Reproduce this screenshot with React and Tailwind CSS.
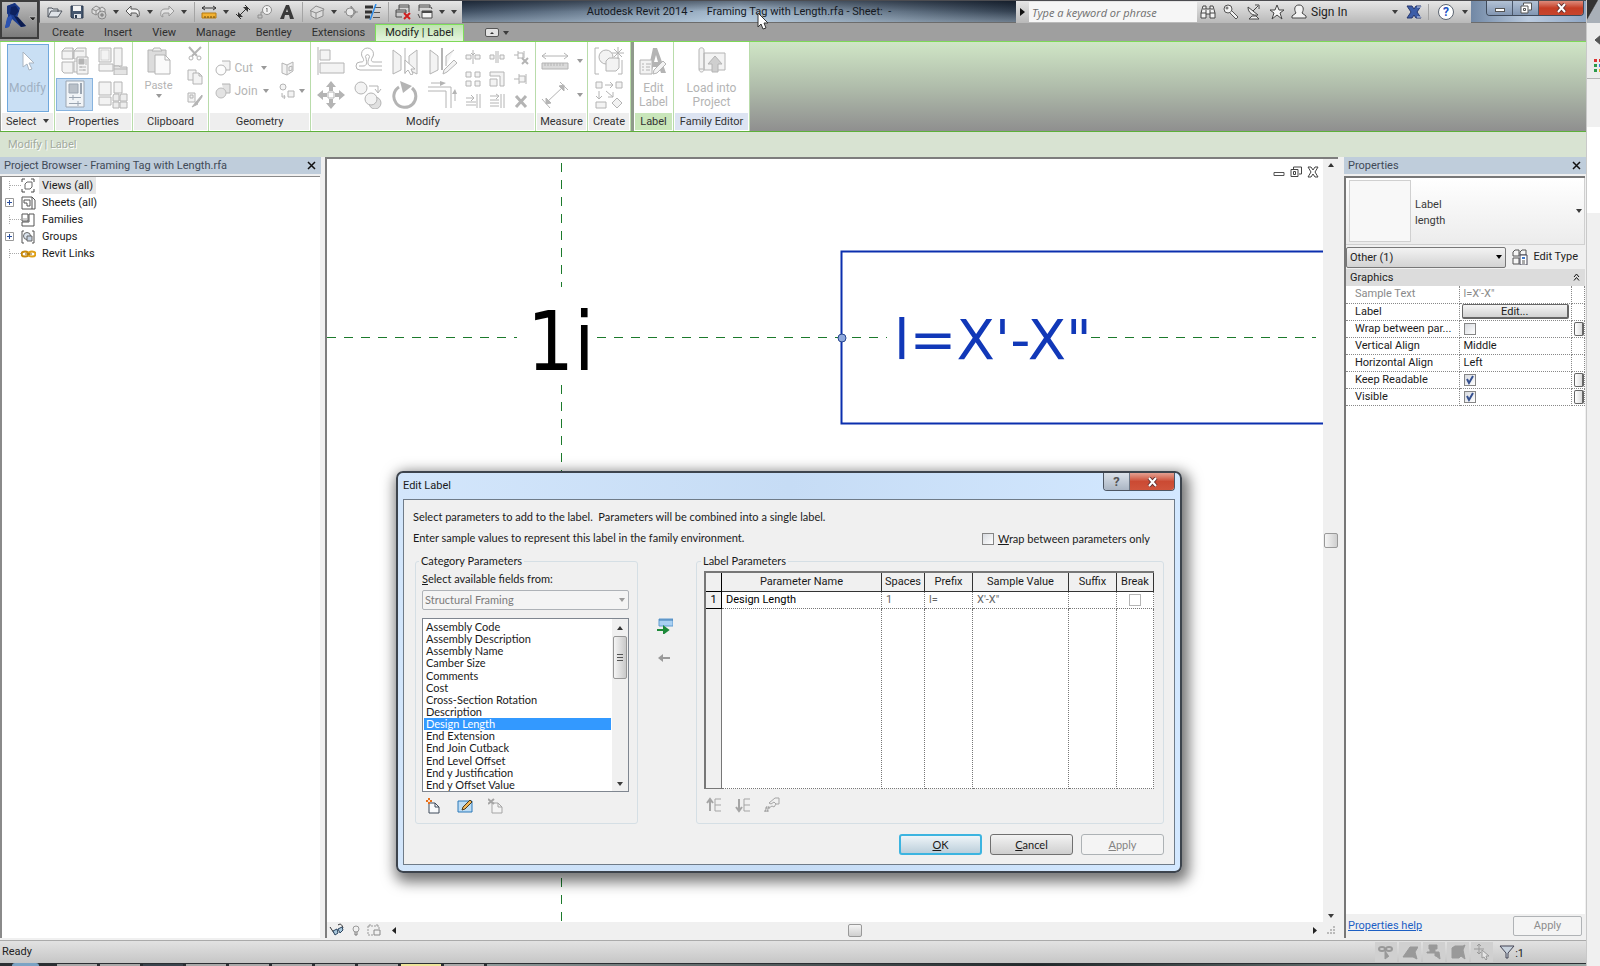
import { useState } from "react";

const UI = "font-[Roboto,'Open_Sans',sans-serif]";

function Icon({ w = 16, h = 16, label, children }) {
  return (
    <svg
      width={w}
      height={h}
      viewBox={`0 0 ${w} ${h}`}
      fill="none"
      stroke="currentColor"
      className="shrink-0"
      role={label ? "img" : undefined}
      aria-label={label}
      aria-hidden={label ? undefined : true}
    >
      {children}
    </svg>
  );
}

function Caret({ className = "text-[#3c3c3c]" }) {
  return (
    <span className={`shrink-0 ${className}`}>
      <Icon w={6} h={4}>
        <path d="M0 0h6L3 4z" fill="currentColor" stroke="none" />
      </Icon>
    </span>
  );
}

/* ---------- quick access toolbar ---------- */

const quickItems = [
  { name: "Open", icon: <Icon><path d="M1 13V4h4l1 1h5v3M1 13l3-6h11l-4 6z" fill="#dfe3e8" stroke="#50565e" /></Icon> },
  { name: "Save", icon: <Icon><path d="M2 2h12v12H3l-1-1z" fill="#45576f" stroke="#2c3a4e" /><path d="M4 2h8v5H4z" fill="#f4f4f4" stroke="none" /><path d="M5 10h7v4H5z" fill="#dfe3e8" stroke="none" /><path d="M6 11h2v3H6z" fill="#2c3a4e" stroke="none" /></Icon> },
  { name: "Synchronize", icon: <Icon><path d="M1 5l4-3 4 2v4l-4 3-4-2zM1 5l4 2 4-3M5 7v4M8 5l3-2 3 2v5" fill="#dedede" stroke="#8a8a8a" /><circle cx="11" cy="11" r="4" fill="#c9c9c9" stroke="#8a8a8a" /><path d="M9 11h4M11 9v4" stroke="#777" /></Icon> },
  { caret: "Synchronize options" },
  { name: "Undo", icon: <Icon><path d="M1 7l5-5v3h4c3 0 5 2 4 7l-2 1c1-3 0-4-2-4H6v3z" fill="#f3f3f3" stroke="#555" /></Icon> },
  { caret: "Undo list" },
  { name: "Redo", icon: <Icon><path d="M15 7l-5-5v3H6c-3 0-5 2-4 7l2 1c-1-3 0-4 2-4h4v3z" fill="#e3e3e3" stroke="#999" /></Icon> },
  { caret: "Redo list" },
  { sep: true },
  { name: "Measure", icon: <Icon><path d="M1 4h14M4 2L1 4l3 2M12 2l3 2-3 2" stroke="#333" /><path d="M1 9h14v5H1z" fill="#f2b233" stroke="#b57a12" /><path d="M4 12v2M7 12v2M10 12v2M13 12v2" stroke="#6d4a0c" /></Icon> },
  { caret: "Measure options" },
  { name: "Aligned Dimension", icon: <Icon><path d="M3 13L13 3M1 10l5 5M10 1l5 5" stroke="#333" /><path d="M3 13v-5l5 5zM13 3v5L8 3z" fill="#333" stroke="none" /></Icon> },
  { name: "Tag by Category", icon: <Icon><circle cx="10" cy="6" r="4.500" fill="#f1f1f1" stroke="#8e8e8e" /><path d="M9 5l1-1v4" stroke="#777" /><path d="M6 8H4v3M1 11h4v3H1z" stroke="#8e8e8e" /></Icon> },
  { name: "Text", icon: <Icon><path d="M1 15L7 1h3l5 14h-4l-1-4H6l-1 4zM7 8h2L8 5z" fill="#3a3a3a" stroke="none" fillRule="evenodd" /></Icon> },
  { sep: true },
  { name: "Default 3D View", icon: <Icon><path d="M1 7l6-5 8 3-1 2v5l-7 3-5-3V7z" fill="#dcdcdc" stroke="#8c8c8c" /><path d="M7 9v6M7 9l7-3M7 9L2 7" stroke="#8c8c8c" /></Icon> },
  { caret: "3D view options" },
  { name: "Section", icon: <Icon><path d="M1 8h2M12 8h3M8 2l5 6-5 6z" fill="#9a9a9a" stroke="#8c8c8c" /><circle cx="7" cy="8" r="4" fill="#e8e8e8" stroke="#8c8c8c" /></Icon> },
  { name: "Thin Lines", icon: <Icon><path d="M0 3h8M0 8h7M0 13h5" stroke="#333" strokeWidth="3" /><path d="M10 3.500h6M9 8.500h6M8 13.500h7" stroke="#555" /><path d="M11 0L5 16" stroke="#2c8be8" strokeWidth="1.500" /></Icon> },
  { sep: true },
  { name: "Close Hidden Windows", icon: <Icon><path d="M4 6V1h10v7M4 3h10M1 13V6h10v3M1 8h10M1 13h6" fill="none" stroke="#4a4a4a" /><path d="M9 9l6 6M15 9l-6 6" stroke="#cf1f1f" strokeWidth="2" /></Icon> },
  { name: "Switch Windows", icon: <Icon><path d="M2 7V1h11v3M2 3h11" stroke="#4a4a4a" /><path d="M5 7h10v7H5z" fill="#f4f4f4" stroke="#4a4a4a" /><path d="M5 8h10" stroke="#4a4a4a" strokeWidth="2" /><path d="M1 10l2 4M14 3l1 2" stroke="#4a4a4a" /></Icon> },
  { caret: "Window list" },
  { caret: "Customize Quick Access Toolbar" },
];

function QuickAccess() {
  return (
    <div className="flex items-center h-[22px] pl-1 pr-[2px] bg-gradient-to-b from-[#e6e6e6] to-[#b9b9b9] shrink-0">
      {quickItems.map((item, i) => {
        if (item.sep) return <span key={i} className="w-2 h-5 flex justify-center"><span className="w-px bg-[#a4a4a4]" /></span>;
        if (item.caret)
          return (
            <button key={i} aria-label={item.caret} className="w-3 h-5 flex items-center justify-center">
              <Caret />
            </button>
          );
        return (
          <button key={i} aria-label={item.name} className="w-[22px] h-5 flex items-center justify-center">
            {item.icon}
          </button>
        );
      })}
    </div>
  );
}

const infoItems = [
  { name: "Search", icon: <Icon><path d="M3 2h3v3h4V2h3l2 7v5H10v-4H6v4H1V9z" fill="#f3f3f3" stroke="#454545" /><path d="M1 9h5M10 9h5M6 6v4M10 6v4M3 5h3M10 5h3" stroke="#454545" /></Icon> },
  { name: "Subscription Center", icon: <Icon><circle cx="5" cy="5" r="4" fill="#f3f3f3" stroke="#555" /><path d="M7 9l6 6 2-2-6-6" fill="#f3f3f3" stroke="#555" /><circle cx="4" cy="4" r="1" stroke="#555" /></Icon> },
  { name: "Communication Center", icon: <Icon><path d="M2 3c0 6 5 9 10 8L2 3zM7 7l5-5M9 1h4v4" fill="#f3f3f3" stroke="#454545" /><path d="M3 15h10l-3-3H6z" fill="#f3f3f3" stroke="#454545" /></Icon> },
  { name: "Favorites", icon: <Icon><path d="M8 1l2 5h5l-4 3 2 6-5-4-5 4 2-6-4-3h5z" fill="#f6f6f6" stroke="#454545" /></Icon> },
];

function TitleBar() {
  return (
    <div className="flex items-center h-[23px] pt-px bg-[#4c4c50] border-b border-[#6c6c6c]">
      <div className="w-[40px] shrink-0" />
      <QuickAccess />
      <div className="relative flex-1 min-w-0 h-full bg-gradient-to-r from-[#2c3a4c] via-[#b4c9dc] to-[#1d2836]">
        <div className="absolute inset-0 bg-gradient-to-b from-[#0d1420]/50 via-[#8fa6bd]/20 to-[#c0d4e6]/50" />
        <p className="relative text-center text-[11px] leading-[21px] text-[#15191f] whitespace-pre">
          Autodesk Revit 2014 -     Framing Tag with Length.rfa - Sheet:  -
        </p>
      </div>
      <div className="flex items-center h-[22px] bg-gradient-to-b from-[#e6e6e6] to-[#b9b9b9] shrink-0">
        <button aria-label="Show search" className="w-[13px] flex justify-center">
          <Icon w={5} h={8}><path d="M0 0v8l5-4z" fill="#111" stroke="none" /></Icon>
        </button>
        <input
          aria-label="Search help"
          placeholder="Type a keyword or phrase"
          className="w-[168px] h-5 px-[3px] pt-[2px] bg-[#f6f6f6] font-['Open_Sans',sans-serif] text-[11px] italic placeholder:text-[#6e6e6e]"
        />
        <div className="flex gap-[7px] px-[3px]">
          {infoItems.map((item) => (
            <button key={item.name} aria-label={item.name}>{item.icon}</button>
          ))}
        </div>
        <button className="flex items-center gap-1 w-[110px] pl-[3px] text-[12px] text-[#222]">
          <Icon><path d="M5 9C3 6 3 1 8 1s5 5 3 8l4 3v2H1v-2z" fill="#f3f3f3" stroke="#454545" /></Icon>
          <span>Sign In</span>
          <span className="ml-auto"><Caret /></span>
        </button>
        <button aria-label="Exchange Apps" className="pl-[8px] pr-[6px]">
          <Icon><path d="M1 2h5l2 3 2-3h5l-4 6 4 6h-5l-2-3-2 3H1l4-6z" fill="#3c5da8" stroke="#26376e" /><path d="M11 3h4M11 13h4" stroke="#cdd8f0" /></Icon>
        </button>
        <span className="w-px h-4 bg-[#a4a4a4]" />
        <button aria-label="Help" className="flex items-center gap-2 pl-[9px] pr-[3px]">
          <span className="size-4 rounded-full border border-[#5b6470] bg-white text-[12px] leading-[14px] font-bold text-[#2352c4]">?</span>
          <Caret />
        </button>
      </div>
      <div className="w-[115px] h-full shrink-0 flex items-start justify-end pr-[2px] bg-gradient-to-r from-[#7188a5] via-[#bccce0] to-[#8fa6c4]">
        <div className="flex h-[15px] border border-t-0 border-[#3f4a5a] rounded-b-[4px] overflow-hidden">
          <button aria-label="Minimize" className="w-[26px] flex items-center justify-center bg-gradient-to-b from-[#b3c2d5] to-[#8296b2] border-r border-[#4b586b]">
            <span className="w-[10px] h-1 mt-1 bg-white border border-[#555]" />
          </button>
          <button aria-label="Restore" className="w-[26px] flex items-center justify-center bg-gradient-to-b from-[#b3c2d5] to-[#8296b2] border-r border-[#4b586b]">
            <Icon w={12} h={12}><path d="M3.500 3V1h8v7H9" fill="#fff" stroke="#555" /><path d="M1 4h7v7H1z" fill="#fff" stroke="#555" /><path d="M3.500 6.500h2v2h-2z" stroke="#555" /></Icon>
          </button>
          <button aria-label="Close" className="w-[44px] flex items-center justify-center bg-gradient-to-b from-[#dd8a7b] via-[#c53d25] to-[#c7452e]">
            <Icon w={11} h={10}><path d="M2 1l7 8M9 1L2 9" stroke="#633" strokeWidth="4" /><path d="M2 1l7 8M9 1L2 9" stroke="#fff" strokeWidth="2" /></Icon>
          </button>
        </div>
      </div>
    </div>
  );
}

function AppButton() {
  return (
    <button aria-label="Application menu" className="absolute left-0 top-0 w-[39px] h-[39px] border-2 border-[#3d3d3d] bg-gradient-to-b from-[#bdbdbd] to-[#7b7b7b] flex items-start justify-center">
      <Icon w={35} h={33}>
        <path d="M5 4l8-3 5 5-3 10 9 8-5 1-9-8-3 8-4 1 3-12z" fill="#1b3c8f" stroke="none" />
        <path d="M5 4l8-3 1 6-5 4-4 1z" fill="#16337f" stroke="none" />
        <path d="M9 5l5-1 3 5-4 5-5-2z" fill="#0e2260" stroke="none" />
        <path d="M12 14l4 1 8 9-5 1z" fill="#0c1c4f" stroke="none" />
        <path d="M3 26l2-10 4-3 1 3-3 9z" fill="#2b52b0" stroke="none" />
        <path d="M27 15h7l-3 4z" fill="#222" stroke="#ddd" strokeWidth="0.500" />
      </Icon>
    </button>
  );
}

const tabs = ["Create", "Insert", "View", "Manage", "Bentley", "Extensions"];

function TabBar() {
  return (
    <nav className="flex items-end h-[19px] pl-[42px] bg-[#9f9f9f] text-[11px] leading-4 text-[#2e2e2e] border-b border-[#7ed957]">
      {tabs.map((t) => (
        <button key={t} className="px-[10px] h-[17px]">{t}</button>
      ))}
      <button className="px-[9px] h-[17px] border border-b-0 border-[#7ee05a] bg-gradient-to-b from-[#bfe3b0] to-[#e6f5df] text-[#222]">
        Modify | Label
      </button>
      <button aria-label="Minimize ribbon" className="flex items-center gap-1 h-[17px] ml-[21px]">
        <span className="w-[14px] h-[9px] rounded-[2px] border border-[#555] bg-[#e3e3e3] flex items-center justify-center">
          <Icon w={4} h={2}><path d="M0 2h4L2 0z" fill="#333" stroke="none" /></Icon>
        </span>
        <Caret />
      </button>
    </nav>
  );
}

/* ---------- ribbon ---------- */

function Tool({ name, className = "", children }) {
  return (
    <button aria-label={name} disabled className={`flex items-center justify-center ${className}`}>
      {children}
    </button>
  );
}

function Panel({ title, width, tone = "bg-[#eeeeee]", children }) {
  return (
    <section className={`flex flex-col shrink-0 bg-white border-r border-[#b9dcab] ${width}`}>
      <div className="flex-1 flex items-center justify-center text-[#b4b4b4]">{children}</div>
      <h2 className={`h-[17px] mx-px mb-px text-center text-[11px] leading-[17px] text-[#333] whitespace-nowrap ${tone}`}>{title}</h2>
    </section>
  );
}

const F = "#f3f3f3";

function PropertiesPanel() {
  return (
    <div className="grid grid-cols-2 gap-x-px">
      <Tool name="Type Properties" className="w-[37px] h-[34px]">
        <Icon w={28} h={28}>
          <path d="M1 4l3-3h8v11H1zM13 4l3-3h9v11H13zM1 15h11v11H3l-2-2zM13 14h8v11h-8z" fill={F} />
          <path d="M1 4h10M13 4h10M12 1v11" />
          <path d="M16 10h11v17H16z" fill={F} /><path d="M18 12h5v5h-5z" fill="currentColor" /><path d="M25 12v6M18 20h7M18 23h7M20 19v2M23 22v2" />
        </Icon>
      </Tool>
      <Tool name="Family Category" className="w-[37px] h-[34px]">
        <Icon w={30} h={28}>
          <path d="M1 1h12v14H1zM16 1h8v18h-8zM1 17h14v7H1z" fill={F} />
          <path d="M3 3h8v10H3z" strokeWidth="0.500" />
          <path d="M16 19h5l1 1h7v8H16z" fill="#e4e4e4" /><path d="M16 22h13" />
        </Icon>
      </Tool>
      <Tool name="Properties" className="w-[37px] h-[33px] border border-[#87b3de] bg-[#c6dcf2]">
        <Icon w={20} h={28}>
          <path d="M1 1h18v26H1z" fill="#f1f4f7" stroke="#9ba5b1" />
          <path d="M4 4h9v9H4z" fill="#b9c0c8" stroke="#9ba5b1" />
          <path d="M16 3v11" stroke="#9ba5b1" strokeWidth="2" />
          <path d="M4 17.500h12M4 23.500h12M8 15v5M13 21v5" stroke="#9ba5b1" />
        </Icon>
      </Tool>
      <Tool name="Family Types" className="w-[37px] h-[34px]">
        <Icon w={30} h={28}>
          <path d="M1 1h12v13H1zM16 1h8v11h-8zM1 16h12v8H1z" fill={F} />
          <path d="M15 15l1-2h5v7h-6zM22 15l1-2h6v7h-7zM15 21h6v6h-6zM22 21h7v6h-7z" fill="#ededed" />
        </Icon>
      </Tool>
    </div>
  );
}

function ClipboardPanel() {
  return (
    <div className="flex items-start gap-3 pl-1 pb-px">
      <button disabled className="flex flex-col items-center text-[11px] leading-4 w-8">
        <Icon w={26} h={30}>
          <path d="M2 4h18v22H2z" fill="#dcdcdc" /><path d="M6 5l2-3h6l2 3z" fill={F} />
          <path d="M9 9h10l5 5v14H9z" fill="#fafafa" /><path d="M19 9v5h5" />
        </Icon>
        <span className="pt-[2px]">Paste</span>
        <Caret className="text-[#9a9a9a]" />
      </button>
      <div className="flex flex-col gap-[7px]">
        <Tool name="Cut to Clipboard">
          <Icon><path d="M2 1l8 9M14 1L5 10" strokeWidth="2" /><circle cx="4" cy="12" r="2" /><circle cx="12" cy="12" r="2" /></Icon>
        </Tool>
        <Tool name="Copy to Clipboard">
          <Icon><path d="M1 1h8v10H1z" fill={F} /><path d="M6 4h6l3 3v8H6z" fill={F} /><path d="M12 4v3h3" /></Icon>
        </Tool>
        <Tool name="Match Type Properties">
          <Icon><path d="M1 1h7v9H1zM3 3h3v3H3z" fill={F} /><path d="M15 3l-6 7 1 2 5-7zM9 10l-4 5 6-3z" fill="currentColor" /></Icon>
        </Tool>
      </div>
    </div>
  );
}

function GeometryPanel() {
  return (
    <div className="grid grid-cols-[60px_26px] gap-y-[7px] pr-1 pt-[3px] text-[12px] leading-4">
      <button disabled className="flex items-center gap-1 text-left">
        <Icon><path d="M7 1h8v9H9" fill={F} /><circle cx="6" cy="10" r="5" fill="#fdfdfd" /></Icon>
        <span>Cut</span>
        <span className="pl-1"><Caret className="text-[#9a9a9a]" /></span>
      </button>
      <Tool name="Cope">
        <Icon><path d="M2 3l5 2 6-3v9l-6 4-5-2z" fill={F} /><path d="M7 5v10M9 7l3-1v4l-3 1z" /></Icon>
      </Tool>
      <button disabled className="flex items-center gap-1 text-left">
        <Icon><path d="M7 1h8v9H9" fill="#e3e3e3" /><circle cx="6" cy="10" r="5" fill="#e3e3e3" stroke="#bbb" /></Icon>
        <span>Join</span>
        <span className="pl-px"><Caret className="text-[#9a9a9a]" /></span>
      </button>
      <button disabled aria-label="Split Face" className="flex items-center gap-1 pl-1">
        <Icon><circle cx="4" cy="4" r="3" fill={F} /><path d="M3 10v4h3M5 12l1 2-1 2M9 8h6v6H9z" fill={F} /></Icon>
        <Caret className="text-[#9a9a9a]" />
      </button>
    </div>
  );
}

const modifyLarge = [
  { name: "Align", d: <><path d="M1 0v28" /><path d="M3 3h10v10H3zM3 16h24v10H3z" fill={F} /></> },
  { name: "Offset", d: <><path d="M28 15h-8c-3 0-3-2-2-4a6 6 0 1 0-9 0c1 2 1 4-2 4H6a4 4 0 0 0 0 8h22" /><path d="M28 19H17c-3 0-4-3-2-8a2 2 0 1 0-3 0c1 5 1 8-3 8H5" /></> },
  { name: "Mirror Pick Axis", d: <><path d="M2 3l8 6v14l-8 4zM26 3l-8 6v14l8 4z" fill={F} /><path d="M14 1v26" /><path d="M14 13v13l3-3 3 5 2-1-2-5h4z" fill="#fff" /></> },
  { name: "Mirror Draw Axis", d: <><path d="M2 3l8 6v14l-8 4zM26 3l-8 6v10" fill={F} /><path d="M14 1v22" strokeWidth="2" /><path d="M15 27l1-4L26 13l3 3-10 9z" fill={F} /></> },
  { name: "Move", d: <><path d="M11 11h6v6h-6z" /><path d="M14 0l5 6h-3v4h-4V6H9zM14 28l5-6h-3v-4h-4v4H9zM0 14l6-5v3h4v4H6v3zM28 14l-6-5v3h-4v4h4v3z" fill="currentColor" stroke="none" /></> },
  { name: "Copy", d: <><circle cx="7" cy="7" r="6" fill={F} /><path d="M15 5h9v6M21 8l3 4 3-4" strokeWidth="1" /><circle cx="21" cy="22" r="6" fill="#e0e0e0" /><circle cx="17" cy="18" r="6" fill={F} /></> },
  { name: "Rotate", d: <><path d="M8 6a11 11 0 1 0 13 1" strokeWidth="3" /><path d="M9 0l12 5-9 7z" fill="currentColor" stroke="none" /></> },
  { name: "Trim", d: <><path d="M0 10h18v17M0 6h23v21" /><path d="M3 2h10M27 12v8" /><path d="M12 0l6 2-6 3zM24 13l3-5 2 5z" fill="currentColor" stroke="none" /></> },
];

const modifySmall = [
  { name: "Split Element", d: <path d="M1 6h5v4H1zM10 6h5v4h-5zM8 1v14M6 4l2 2 2-2" fill={F} /> },
  { name: "Split with Gap", d: <path d="M1 6h4v4H1zM11 6h4v4h-4zM7 2v12M9 2v12" fill={F} /> },
  { name: "Unpin", d: <><path d="M1 6h4M5 2v8M5 4h5v5H5M11 2v7" /><path d="M9 9l6 6M15 9l-6 6" strokeWidth="2" /></> },
  { name: "Array", d: <path d="M1 1h5v5H1zM10 1h5v5h-5zM1 10h5v5H1zM10 10h5v5h-5z" fill={F} strokeWidth="1" /> },
  { name: "Scale", d: <path d="M1 1h14v14h-4V5H1zM1 8h7v7H1z" fill={F} /> },
  { name: "Pin", d: <path d="M1 8h5M6 3v10M6 5h6v6H6M13 3v10" fill={F} /> },
  { name: "Trim Single", d: <path d="M1 5h8M6 2l3 3-3 3M1 9h10M1 12h10M12 1v14M15 1v14" /> },
  { name: "Trim Multiple", d: <path d="M1 3h8M1 7h9M1 10h9M1 13h9M7 1l3 2-3 3M12 1v14M15 1v14" /> },
  { name: "Delete", d: <path d="M3 3l10 11M13 3L3 14" strokeWidth="3" /> },
];

function ModifyPanel() {
  return (
    <div className="flex items-center gap-2">
      <div className="grid grid-cols-4 gap-x-2 gap-y-[6px]">
        {modifyLarge.map((t) => (
          <Tool key={t.name} name={t.name}><Icon w={29} h={28}>{t.d}</Icon></Tool>
        ))}
      </div>
      <div className="grid grid-cols-3 gap-x-2 gap-y-[6px] pt-[2px]">
        {modifySmall.map((t) => (
          <Tool key={t.name} name={t.name}><Icon>{t.d}</Icon></Tool>
        ))}
      </div>
    </div>
  );
}

function Ribbon() {
  return (
    <div className="flex h-[90px] pl-px border-b border-[#5db03a] bg-gradient-to-b from-[#d0e6c6] via-[#b0bdab] to-[#8f8f8f]">
      <Panel title={<>Select <span className="inline-block pl-1 pb-[2px]"><Caret /></span></>} width="w-[54px]">
        <button disabled className="w-[42px] h-[68px] border border-[#6fa8dc] bg-[#c9dff4] text-[12px] text-[#9fb0c2] flex flex-col items-center gap-2 pt-[6px]">
          <Icon w={14} h={20}><path d="M2 1v15l4-3 2 6 3-1-3-6h5z" fill="#fff" stroke="#a9b4c0" /></Icon>
          Modify
        </button>
      </Panel>
      <Panel title="Properties" width="w-[78px]"><PropertiesPanel /></Panel>
      <Panel title="Clipboard" width="w-[76px]"><ClipboardPanel /></Panel>
      <Panel title="Geometry" width="w-[102px]"><GeometryPanel /></Panel>
      <Panel title="Modify" width="w-[225px]"><ModifyPanel /></Panel>
      <Panel title="Measure" width="w-[52px]">
        <div className="flex flex-col gap-[6px]">
          <button disabled aria-label="Measure" className="flex items-center gap-2">
            <Icon w={28} h={28}><path d="M1 9h26M5 6L1 9l4 3M23 6l4 3-4 3" strokeWidth="1" /><path d="M1 16h26v6H1z" fill="#dadada" /><path d="M4 16v3M7 16v3M10 16v3M13 16v3M16 16v3M19 16v3M22 16v3" /></Icon>
            <Caret className="text-[#9a9a9a]" />
          </button>
          <button disabled aria-label="Dimension" className="flex items-center gap-2">
            <Icon w={28} h={28}><path d="M5 22L23 5M1 18l8 9M19 1l8 8" /><path d="M5 23v-6l5 5zM23 4v6l-5-5z" fill="currentColor" /></Icon>
            <Caret className="text-[#9a9a9a]" />
          </button>
        </div>
      </Panel>
      <Panel title="Create" width="w-[43px]">
        <div className="flex flex-col gap-[6px]">
          <Tool name="Create Group">
            <Icon w={30} h={28}><path d="M5 1H1v26h4M24 27h4V13" /><circle cx="12" cy="10" r="7" fill={F} /><path d="M12 14l3-3h10v10l-3 3H12z" fill={F} /><path d="M24 0v12M18 6h12M20 2l8 8M28 2l-8 8" /></Icon>
          </Tool>
          <Tool name="Create Similar">
            <Icon w={28} h={28}><path d="M1 1h6v6H1zM21 1h6v6h-6zM1 21h10v6H1zM22 17l5 5-5 5-5-5z" fill={F} /><path d="M10 4h8M15 1l3 3-3 3M4 10v8M1 15l3 3 3-3M11 10l7 6M18 11v5h-5" strokeWidth="1" /></Icon>
          </Tool>
        </div>
      </Panel>
      <div className="w-[3px] bg-[#8f9a8b]" />
      <Panel title="Label" width="w-[40px]" tone="bg-[#c9e6ba]">
        <button disabled className="flex flex-col items-center text-[12px] leading-[14px] gap-1">
          <Icon w={28} h={30}><path d="M9 24L14 1h4l9 25h-5l-2-6h-6l-2 6zM15 15h4l-2-7z" fill="currentColor" stroke="none" fillRule="evenodd" /><path d="M1 13h12v14H1z" fill={F} /><path d="M3 17h2M7 17h5M3 20h2M7 20h4M3 23h2M7 23h4" /><path d="M14 27l1-4 9-9 3 3-9 9z" fill={F} /></Icon>
          <span>Edit<br />Label</span>
        </button>
      </Panel>
      <Panel title="Family Editor" width="w-[76px]" tone="bg-[#dde4f2]">
        <button disabled className="flex flex-col items-center text-[12px] leading-[14px] gap-1">
          <Icon w={28} h={30}><path d="M6 6h21v17H6zM1 3c0-3 5-3 5 0v19c0 4-5 4-5 0z" fill={F} /><path d="M1 22h4" /><path d="M17 9l7 8h-4v8h-6v-8h-4z" fill="#cfcfcf" /></Icon>
          <span>Load into<br />Project</span>
        </button>
      </Panel>
    </div>
  );
}

/* ---------- docked panels ---------- */

function CloseX() {
  return <Icon w={9} h={9}><path d="M1 1l7 7M8 1L1 8" stroke="#111" strokeWidth="1.500" /></Icon>;
}

function DockTitle({ children }) {
  return (
    <div className="h-[17px] flex items-center justify-between pl-1 pr-[5px] bg-[#bfcddb] text-[11px] leading-[17px] text-[#3f4a57]">
      <h2>{children}</h2>
      <button aria-label={`Close ${children}`}><CloseX /></button>
    </div>
  );
}

const tree = [
  { name: "Views (all)", selected: true, icon: <><path d="M4 1H1v3M1 11v3h3M10 1h3v3M13 11v3h-3" stroke="#444" /><path d="M4 6l2-2h5v5l-2 2H4z" fill="#fff" stroke="#666" /></> },
  { name: "Sheets (all)", expand: true, icon: <><path d="M1 2h10l3 3v9H1z" fill="#fff" stroke="#555" /><path d="M11 2v12M3 5h6v6H6V8H3z" stroke="#555" /></> },
  { name: "Families", icon: <><path d="M1 2h6v7H1zM8 2h5v12H1v-4h7z" fill="#fff" stroke="#555" /><path d="M2 7h4" stroke="#999" /></> },
  { name: "Groups", expand: true, icon: <><path d="M3 2H1v12h2M11 2h2v12h-2" stroke="#555" /><circle cx="6" cy="7" r="3.500" fill="#dbe4ee" stroke="#666" /><path d="M6 7h5v5H6z" fill="#c6d2e0" stroke="#666" /></> },
  { name: "Revit Links", icon: <><ellipse cx="4" cy="8" rx="3.500" ry="2.500" stroke="#c98a0c" strokeWidth="2" /><ellipse cx="11" cy="8" rx="3.500" ry="2.500" stroke="#e0a015" strokeWidth="2" /><path d="M4 8h7" stroke="#8b5d05" /></> },
];

function ProjectBrowser() {
  return (
    <aside className="w-[321px] shrink-0 flex flex-col">
      <DockTitle>Project Browser - Framing Tag with Length.rfa</DockTitle>
      <ul className="flex-1 mt-[2px] mb-[2px] mr-[1px] pl-[3px] border-l-2 border-t border-[#8a8a8a] bg-white text-[11px] text-[#1a1a1a]">
        {tree.map((n) => (
          <li key={n.name} className="h-[17px] flex items-center">
            <span className="w-4 flex items-center">
              {n.expand ? (
                <button aria-label={`Expand ${n.name}`}>
                  <Icon w={9} h={9}><path d="M.5.5h8v8h-8z" fill="#fff" stroke="#999" /><path d="M2 4.500h5M4.500 2v5" stroke="#2b4f9e" /></Icon>
                </button>
              ) : (
                <Icon w={16} h={9}><path d="M4.500 0v9M5 4.500h11" stroke="#aaa" strokeDasharray="1 1" /></Icon>
              )}
            </span>
            <Icon w={15} h={16}>{n.icon}</Icon>
            <span className={`ml-[3px] px-[3px] leading-[17px] ${n.selected ? "bg-[#e6e6e6]" : ""}`}>{n.name}</span>
          </li>
        ))}
      </ul>
    </aside>
  );
}

function GridRow({ name, muted, button, children }) {
  return (
    <tr className={`h-[17px] ${muted ? "text-[#8a8a8a]" : "text-[#1a1a1a]"}`}>
      <th scope="row" className="pl-[9px] text-left font-normal border-b border-r border-dotted border-[#888]">{name}</th>
      <td className="pl-1 border-b border-r border-dotted border-[#888]">{children}</td>
      <td className="border-b border-r border-dotted border-[#888]">
        {button && <button aria-label={`Associate ${name}`} className="block w-[10px] h-[14px] ml-[2px] rounded-[2px] border border-r-2 border-[#666] bg-gradient-to-r from-white to-[#ddd]" />}
      </td>
    </tr>
  );
}

function Check({ label, checked, onChange, dim }) {
  return (
    <span className="relative inline-flex size-3 align-middle">
      <input
        type="checkbox"
        aria-label={label}
        checked={checked}
        onChange={onChange}
        className={`appearance-none size-3 border bg-gradient-to-br ${dim ? "border-[#b5b5b5] from-white to-white" : "border-[#858585] from-[#d8dbe0] to-white"}`}
      />
      {checked && (
        <svg viewBox="0 0 12 12" className="absolute inset-0 pointer-events-none" fill="none" stroke="#35508f" strokeWidth="2">
          <path d="M3 5l2 4 4-7" />
        </svg>
      )}
    </span>
  );
}

function Properties() {
  const [flags, setFlags] = useState({ wrap: false, keep: true, visible: true });
  const flip = (k) => () => setFlags({ ...flags, [k]: !flags[k] });
  return (
    <aside className="w-[242px] shrink-0 flex flex-col bg-[#f0f0f0]">
      <DockTitle>Properties</DockTitle>
      <div className="flex-1 flex flex-col mt-[2px] mb-[2px] mr-[1px] border-l-2 border-t-2 border-[#777] bg-white text-[11px] leading-4">
        <button className="flex items-center h-[67px] pl-[3px] pr-[2px] gap-1 text-left border-b border-r border-[#d0d0d0] bg-gradient-to-b from-white to-[#ececec] text-[#3a3a3a]">
          <span className="w-[62px] h-[62px] border border-[#d0d0d0] bg-[#f8f8f8]" />
          <span className="pt-1">Label<br />length</span>
          <span className="ml-auto"><Caret /></span>
        </button>
        <div className="flex items-center justify-between h-6 pr-[7px] bg-[#f0f0f0]">
          <span className="relative w-[160px] h-[21px]">
            <select aria-label="Element filter" className="appearance-none size-full px-[3px] pt-px rounded-[2px] border border-[#777] bg-gradient-to-b from-[#f3f3f3] to-[#d3d3d3] text-[#222]">
              <option>Other (1)</option>
            </select>
            <span className="absolute right-1 top-2 pointer-events-none"><Caret className="text-black" /></span>
          </span>
          <button className="flex items-center gap-[5px] text-[#222]">
            <Icon><path d="M1 3l2-2h4v6H1zM8 3l2-2h4v5H8zM1 9h6v6H1z" fill="#f6f6f6" stroke="#555" /><path d="M8 6h7v10H8z" fill="#fff" stroke="#445" /><path d="M10 8h3v2h-3z" fill="#3f78c9" stroke="none" /><path d="M10 12h3M10 14h3" stroke="#555" /></Icon>
            Edit Type
          </button>
        </div>
        <table className="w-full border-collapse table-fixed">
          <colgroup>
            <col className="w-[113px]" />
            <col />
            <col className="w-[13px]" />
          </colgroup>
          <thead>
            <tr className="h-[17px] bg-[#dcdcdc] text-[#222]">
              <th colSpan={2} className="pl-1 text-left font-normal">Graphics</th>
              <th>
                <button aria-label="Collapse Graphics" className="-ml-1">
                  <Icon w={7} h={8}><path d="M1 4l2.500-3L6 4M1 7.500l2.500-3 2.500 3" stroke="#111" /></Icon>
                </button>
              </th>
            </tr>
          </thead>
          <tbody>
            <GridRow name="Sample Text" muted>l=X'-X"</GridRow>
            <GridRow name="Label">
              <button className="block w-full h-[15px] -ml-[2px] leading-[13px] rounded-[2px] border border-r-2 border-b-2 border-[#666] bg-gradient-to-b from-[#f5f5f5] to-[#d2d2d2]">Edit...</button>
            </GridRow>
            <GridRow name="Wrap between par..." button><Check label="Wrap between parameters" checked={flags.wrap} onChange={flip("wrap")} /></GridRow>
            <GridRow name="Vertical Align">Middle</GridRow>
            <GridRow name="Horizontal Align">Left</GridRow>
            <GridRow name="Keep Readable" button><Check label="Keep Readable" checked={flags.keep} onChange={flip("keep")} /></GridRow>
            <GridRow name="Visible" button><Check label="Visible" checked={flags.visible} onChange={flip("visible")} /></GridRow>
          </tbody>
        </table>
        <div className="mt-auto h-6 flex items-center justify-between pl-[2px] pr-[3px] bg-[#f0f0f0]">
          <a href="#help" className="underline text-[#1c5fc4]">Properties help</a>
          <button disabled className="w-[69px] h-5 rounded-[2px] border border-[#b0b3b6] bg-[#f4f4f4] text-[#8d8d8d]">Apply</button>
        </div>
      </div>
    </aside>
  );
}

/* ---------- drawing area ---------- */

function SheetDrawing() {
  return (
    <svg width="100%" height="100%" className="absolute inset-0" fill="none">
      <g stroke="#1c7a2c" strokeDasharray="9 8">
        <path d="M234.500 4V128M234.500 226V764" />
        <path d="M0 178.500H190M270 178.500H560M764 178.500H989" />
      </g>
      <path d="M1400 92.500H514.500V264.500H1400" stroke="#0b2fae" strokeWidth="2" />
      <circle cx="515" cy="179" r="4" fill="#8fa9dc" stroke="#27468f" />
      <text x="200" y="211" fontSize="82" fill="#000" className="font-['DejaVu_Sans_Condensed','DejaVu_Sans',sans-serif]">1i</text>
      <text x="567" y="200" fontSize="56" fill="#1138b8" className="font-['DejaVu_Sans',sans-serif]">l=X'-X"</text>
    </svg>
  );
}

function Canvas() {
  return (
    <main className="flex-1 min-w-0 ml-1 mb-[2px] flex flex-col border-l-2 border-t-2 border-[#7d7d7d] bg-white">
      <div className="flex-1 flex min-h-0">
        <div className="relative flex-1 min-w-0 overflow-hidden">
          <SheetDrawing />
          <div className="absolute right-1 top-[7px] flex gap-[5px] items-center">
            <button aria-label="Minimize view"><Icon w={12} h={12}><path d="M1 6.500h10v3H1z" fill="#fff" stroke="#555" /></Icon></button>
            <button aria-label="Restore view"><Icon w={12} h={12}><path d="M3.500 3V1h8v7H9M1 3.500h7v7H1zM3.500 5.500h2v3h-2z" stroke="#444" /></Icon></button>
            <button aria-label="Close view"><Icon w={12} h={12}><path d="M1 1h3l2 3 2-3h3L8 6l3 5H8L6 8l-2 3H1l3-5z" fill="#fff" stroke="#444" /></Icon></button>
          </div>
        </div>
        <div className="w-[15px] flex flex-col items-center justify-between py-1 bg-[#f0f0f0]">
          <button aria-label="Scroll up"><Icon w={6} h={4}><path d="M0 4h6L3 0z" fill="#333" stroke="none" /></Icon></button>
          <span className="w-[14px] h-[15px] rounded-[2px] border border-[#999] bg-gradient-to-r from-[#f5f5f5] to-[#cfcfcf]" />
          <button aria-label="Scroll down"><Caret /></button>
        </div>
      </div>
      <div className="h-4 flex items-center bg-[#f0f0f0] text-[#444]">
        <div className="flex items-center gap-1 pl-[2px] w-[58px]">
          <button aria-label="Temporary hide or isolate">
            <Icon w={15} h={14}><path d="M1 4l4 6M9 2c3-2 4 0 5 3" stroke="#333" /><path d="M4 8l4-2 1 4-3 2zM9 6l4-2 1 3-3 3z" fill="#a9c8dc" stroke="#2c4560" /></Icon>
          </button>
          <button aria-label="Reveal hidden elements"><Icon w={15} h={14}><circle cx="8" cy="6" r="3" stroke="#999" /><path d="M7 9v3h2V9" stroke="#777" /></Icon></button>
          <button aria-label="Crop region"><Icon w={15} h={14}><path d="M1 3h11v3M1 3v9h6M3 1v2M10 1v2" stroke="#999" strokeDasharray="2 1" /><path d="M7 7h6v5H7z" stroke="#888" /></Icon></button>
        </div>
        <button aria-label="Scroll left" className="w-3 ml-[3px] flex justify-center"><Icon w={4} h={7}><path d="M4 0v7L0 3.500z" fill="#222" stroke="none" /></Icon></button>
        <span className="flex-1 flex justify-center pr-1">
          <span className="w-[14px] h-[13px] rounded-[2px] border border-[#999] bg-gradient-to-b from-[#f5f5f5] to-[#cfcfcf]" />
        </span>
        <button aria-label="Scroll right" className="mr-[6px]"><Icon w={4} h={7}><path d="M0 0v7l4-3.500z" fill="#222" stroke="none" /></Icon></button>
        <span className="w-[15px] flex justify-center">
          <Icon w={9} h={9}><path d="M7 1h2M4 4h2M7 4h2M1 7h2M4 7h2M7 7h2" stroke="#bbb" strokeWidth="2" /></Icon>
        </span>
      </div>
    </main>
  );
}

/* ---------- edit label dialog ---------- */

const fields = [
  "Assembly Code", "Assembly Description", "Assembly Name", "Camber Size", "Comments", "Cost",
  "Cross-Section Rotation", "Description", "Design Length", "End Extension", "End Join Cutback",
  "End Level Offset", "End y Justification", "End y Offset Value",
];

function Group({ legend, className = "", children }) {
  return (
    <fieldset className={`min-w-0 border border-[#d5dfe5] rounded-[3px] ${className}`}>
      <legend className="-ml-[3px] px-[2px] leading-3">{legend}</legend>
      {children}
    </fieldset>
  );
}

function FieldList() {
  const [selected, setSelected] = useState("Design Length");
  return (
    <div className="flex h-[174px] mt-2 border border-[#7f8690] bg-white">
      <ul role="listbox" aria-label="Available fields" className="flex-1 grid auto-rows-fr overflow-hidden px-px pt-[2px]">
        {fields.map((f) => (
          <li
            key={f}
            role="option"
            aria-selected={f === selected}
            onClick={() => setSelected(f)}
            className={`px-[2px] leading-3 min-h-0 ${f === selected ? "bg-[#3399ff] text-white" : ""}`}
          >
            {f}
          </li>
        ))}
      </ul>
      <div className="w-4 flex flex-col items-center bg-[#f0f0f0]">
        <button aria-label="Scroll list up" className="h-[17px]"><Icon w={6} h={4}><path d="M0 4h6L3 0z" fill="#333" stroke="none" /></Icon></button>
        <span className="w-[14px] h-[43px] rounded-[2px] border border-[#979797] bg-gradient-to-r from-[#f5f5f5] to-[#c9c9c9] flex flex-col items-center justify-center gap-px">
          <span className="w-[6px] h-px bg-[#555]" />
          <span className="w-[6px] h-px bg-[#555] my-px" />
          <span className="w-[6px] h-px bg-[#555]" />
        </span>
        <button aria-label="Scroll list down" className="mt-auto h-[15px]"><Caret /></button>
      </div>
    </div>
  );
}

const columns = [
  ["Parameter Name", "w-[160px]"],
  ["Spaces", "w-[43px]"],
  ["Prefix", "w-[48px]"],
  ["Sample Value", "w-[96px]"],
  ["Suffix", "w-[48px]"],
  ["Break", "w-[37px]"],
];

function LabelTable() {
  const [brk, setBrk] = useState(false);
  const cell = "border-r border-b border-dotted border-[#777]";
  return (
    <table className={`w-full h-[218px] table-fixed border-separate border-spacing-0 border-l-2 border-t-2 border-[#777] bg-white text-[11px] ${UI}`}>
      <thead>
        <tr className="h-[19px] bg-[#f0f0f0]">
          <th aria-label="Row" className="w-[16px] border-r border-b border-black" />
          {columns.map(([name, w]) => (
            <th key={name} className={`font-normal border-r border-b border-[#333] ${w}`}>{name}</th>
          ))}
        </tr>
      </thead>
      <tbody>
        <tr className="h-[17px] leading-4 text-[#666]">
          <th className="font-normal text-black bg-[#f0f0f0] border-r border-b border-black">1</th>
          <td className={`pl-1 text-black ${cell}`}>Design Length</td>
          <td className={`pl-1 ${cell}`}>1</td>
          <td className={`pl-1 ${cell}`}>l=</td>
          <td className={`pl-1 ${cell}`}>X'-X"</td>
          <td className={cell} />
          <td className={`text-center leading-3 ${cell}`}><Check label="Break" dim checked={brk} onChange={() => setBrk(!brk)} /></td>
        </tr>
        <tr>
          <td className="bg-[#f0f0f0] border-r border-b border-[#777]" />
          {columns.map(([name]) => <td key={name} className={cell} />)}
        </tr>
      </tbody>
    </table>
  );
}

function EditLabelDialog() {
  const [wrap, setWrap] = useState(false);
  return (
    <div
      role="dialog"
      aria-label="Edit Label"
      className="absolute left-[396px] top-[471px] w-[786px] flex flex-col px-[5px] pb-[6px] rounded-[7px] border-2 border-[#3d444d] bg-gradient-to-r from-[#d3e6fb] via-[#c6dcf5] to-[#d3e8ff] shadow-[3px_5px_14px_4px_rgba(0,0,0,0.55)] text-[11px] text-[#1a1a1a] font-[Lato,'Open_Sans',sans-serif]"
    >
      <div className={`flex items-start justify-between h-[26px] ${UI}`}>
        <h2 className="pt-1 leading-[17px] text-[11px]">Edit Label</h2>
        <div className="flex h-[18px] border border-t-0 border-[#4d5663] rounded-b-[4px] overflow-hidden">
          <button aria-label="Help" className="w-[26px] bg-gradient-to-b from-[#dbe2ea] to-[#aab5c3] border-r border-[#6b7685] text-[13px] leading-4 font-bold text-[#555]">?</button>
          <button aria-label="Close dialog" className="w-[44px] flex items-center justify-center bg-gradient-to-b from-[#e3a092] via-[#cb4a33] to-[#d0543c]">
            <Icon w={11} h={10}><path d="M2 1l7 8M9 1L2 9" stroke="#633" strokeWidth="4" /><path d="M2 1l7 8M9 1L2 9" stroke="#fff" strokeWidth="2" /></Icon>
          </button>
        </div>
      </div>

      <div className="border border-[#6f7b88] bg-[#f0f0f0] pl-[9px] pr-[10px] pb-[9px]">
        <p className="pt-[9px] leading-4 whitespace-pre">Select parameters to add to the label.  Parameters will be combined into a single label.</p>
        <div className="flex justify-between mt-1 h-[18px] leading-4 pr-[14px]">
          <p className="pt-px">Enter sample values to represent this label in the family environment.</p>
          <label className="flex items-center gap-1 pt-[2px]">
            <Check label="Wrap between parameters only" checked={wrap} onChange={() => setWrap(!wrap)} />
            <span><u>W</u>rap between parameters only</span>
          </label>
        </div>

        <div className="flex mt-2 pl-[2px]">
          <Group legend="Category Parameters" className="w-[223px] h-[269px] pl-[6px] pr-[8px]">
            <label htmlFor="category" className="block mt-1 leading-4"><u>S</u>elect available fields from:</label>
            <div className="relative mt-[3px] h-5">
              <select id="category" disabled className="appearance-none size-full px-[2px] border border-[#aeb2b7] rounded-[2px] bg-[#f4f4f4] text-[#7b7b7b] opacity-100">
                <option>Structural Framing</option>
              </select>
              <span className="absolute right-1 top-2 pointer-events-none"><Caret className="text-[#9b9b9b]" /></span>
            </div>
            <FieldList />
            <div className="flex gap-[15px] mt-[6px] pl-1">
              <button aria-label="Add parameter"><Icon><path d="M3 5h6l4 4v6H3z" fill="#f8fafc" stroke="#3f4a5a" /><path d="M9 5v4h4" stroke="#3f4a5a" /><path d="M3 0v6M0 3h6" stroke="#e8701a" strokeWidth="2" /><circle cx="3" cy="3" r="1" fill="#fff" stroke="none" /></Icon></button>
              <button aria-label="Edit parameter"><Icon><path d="M1 3h14v11H1z" fill="#bcdcf5" stroke="#2b78b8" /><path d="M5 12l1-3 7-7 2 2-7 7z" fill="#f0b65a" stroke="#4a3a1e" /></Icon></button>
              <button aria-label="Delete parameter" disabled><Icon><path d="M4 5h6l4 4v6H4z" fill="#f4f4f4" stroke="#a5a5a5" /><path d="M10 5v4h4" stroke="#a5a5a5" /><path d="M0 1l6 5M6 1L0 6" stroke="#a5a5a5" strokeWidth="2" /></Icon></button>
            </div>
          </Group>

          <div className="w-[58px] flex flex-col items-center gap-4 pt-[63px] pr-1">
            <button aria-label="Add to label"><Icon><path d="M2 1h14v7H2z" fill="#a9d0f2" stroke="#5f9bd0" /><path d="M2 2h14" stroke="#3b78b0" /><path d="M0 12h7M7 9l4 3-4 3z" fill="#1e8a3a" stroke="#1e8a3a" strokeWidth="2" /></Icon></button>
            <button aria-label="Remove from label" disabled><Icon><path d="M4 8h9" stroke="#9a9a9a" strokeWidth="2" /><path d="M1 8l5-4v8z" fill="#9a9a9a" stroke="none" /></Icon></button>
          </div>

          <Group legend="Label Parameters" className="flex-1 h-[269px] pl-[7px] pr-[10px]">
            <div className="mt-1"><LabelTable /></div>
            <div className="flex gap-[13px] mt-2 pl-[2px] text-[#a5a5a5]">
              <button aria-label="Move parameter up" disabled><Icon><path d="M4 14V2M1 6l3-4 3 4" strokeWidth="2" /><path d="M15 2H9v12h6M9 8h6" /></Icon></button>
              <button aria-label="Move parameter down" disabled><Icon><path d="M4 2v12M1 10l3 4 3-4" strokeWidth="2" /><path d="M15 2H9v12h6M9 8h6" /></Icon></button>
              <button aria-label="Edit units format" disabled><Icon><path d="M15 1v6h-3l-2 3-2-1-3 2M15 1h-4L5 6l2 1 3-2M12 7l-2-2M1 11h5M0 14h5M3 9l-2 6M5 9l-2 6" /></Icon></button>
            </div>
          </Group>
        </div>

        <div className="flex justify-end gap-2 mt-[10px]">
          <button className="w-[83px] h-[21px] rounded-[3px] border-2 border-[#3cb4e0] bg-gradient-to-b from-[#eef4f8] to-[#bccfdb] leading-4"><u>O</u>K</button>
          <button className="w-[83px] h-[21px] rounded-[3px] border border-[#707070] bg-gradient-to-b from-[#f3f3f3] to-[#cfcfcf] leading-4"><u>C</u>ancel</button>
          <button disabled className="w-[83px] h-[21px] rounded-[3px] border border-[#adb2b5] bg-[#f4f4f4] text-[#838383] leading-4"><u>A</u>pply</button>
        </div>
      </div>
    </div>
  );
}

/* ---------- bottom ---------- */

const selectTools = [
  { name: "Select links", d: <><ellipse cx="4" cy="5" rx="3" ry="2" strokeWidth="2" /><ellipse cx="11" cy="5" rx="3" ry="2" strokeWidth="2" /><path d="M7 6v9l4-3" fill="currentColor" /></> },
  { name: "Select underlay", d: <path d="M1 13l7-10h8l-3 5 2 7-4-2z" fill="currentColor" /> },
  { name: "Select pinned", d: <path d="M3 1h8v4h-2v3h4l1 7-4-3-1 0v-3H1V8h3V5H3z" fill="currentColor" /> },
  { name: "Select by face", d: <path d="M2 4l3-2h8l2-1-2 5 2 9-4-3-2 2H2z" fill="currentColor" /> },
  { name: "Drag on selection", d: <><path d="M5 0v10M0 5h10M3 2l2-2 2 2M3 8l2 2 2-2" /><path d="M8 6v8l2-1 2 3 1-1-1-3h3z" fill="#e5e5e5" /></> },
];

function StatusBar() {
  return (
    <footer className="h-[23px] flex items-center justify-between border-t border-[#aaa] bg-gradient-to-b from-[#e2e2e2] to-[#c6c6c6] text-[11px] text-[#222] pl-[2px]">
      <span>Ready</span>
      <div className="flex items-center gap-[2px] pr-[62px] text-[#999]">
        {selectTools.map((t) => (
          <button key={t.name} aria-label={t.name} className="w-[22px] h-5 flex items-center justify-center bg-[#d0d0d0]"><Icon>{t.d}</Icon></button>
        ))}
        <button aria-label="Filter, 1 selected" className="flex items-end pl-1 text-[#222]">
          <Icon><path d="M1 2h14L9 9v5H7V9z" fill="#c9d3de" stroke="#445" /></Icon>
          <span className="leading-3">:1</span>
        </button>
      </div>
    </footer>
  );
}

function Taskbar() {
  return (
    <div className="relative h-[3px] flex gap-[3px] pl-[57px] bg-[#2b2f33] overflow-hidden">
      <span className="absolute left-3 top-0 w-[27px] h-[3px] rounded-t-full bg-[#7ba3c4]" />
      {[0, 1, 2, 3, 4, 5, 6, 7, 8, 9].map((n) => (
        <span key={n} className={`w-10 mt-px ${n === 2 ? "bg-[#3b444d]" : n === 8 ? "bg-[#efe49a]" : "bg-[#a9a9a9]"}`} />
      ))}
      <span className="flex-1 mt-px bg-gradient-to-r from-[#8f9a9a] via-[#22292b] to-[#9aaaa6]" />
    </div>
  );
}

function BackgroundBrowser() {
  return (
    <div className="w-[14px] shrink-0 flex flex-col bg-[#f0f0f0] border-l border-[#c9c9c9] overflow-hidden">
      <div className="h-[23px] bg-gradient-to-br from-[#333] from-40% to-[#a9b0b8] to-45%" />
      <div className="h-14 pl-[7px] pt-3 bg-[#ececec] border-b border-[#b5b5b5]">
        <Icon w={8} h={10}><path d="M7 0L1 5l6 5" fill="#555" stroke="#555" /></Icon>
        <div className="grid grid-cols-2 gap-[2px] w-2 mt-[14px]">
          <span className="size-[3px] bg-[#d33]" /><span className="size-[3px] bg-[#d33]" />
          <span className="size-[3px] bg-[#2a9a4a]" /><span className="size-[3px] bg-[#3a78d8]" />
          <span className="size-[3px] bg-[#2a9a4a]" /><span className="size-[3px] bg-[#e8b020]" />
        </div>
      </div>
      <div className="h-12" />
      <div className="h-[86px] bg-white" />
    </div>
  );
}

export default function App() {
  return (
    <div className={`relative flex h-screen overflow-hidden bg-[#f0f0f0] text-[#222] ${UI}`}>
      <div className="flex-1 min-w-0 flex flex-col">
        <TitleBar />
        <TabBar />
        <Ribbon />
        <div className="h-[25px] pl-2 pt-px flex items-center bg-[#d8e3d2] text-[11px] text-[#a2aa9e]">
          <span className="[text-shadow:1px_1px_0_#fff]">Modify | Label</span>
        </div>
        <div className="flex-1 min-h-0 flex">
          <ProjectBrowser />
          <Canvas />
          <div className="w-[6px]" />
          <Properties />
        </div>
        <StatusBar />
        <Taskbar />
      </div>
      <BackgroundBrowser />
      <AppButton />
      <EditLabelDialog />
      <svg width="12" height="18" viewBox="0 0 12 18" className="absolute left-[757px] top-3 pointer-events-none">
        <path d="M1 1v14l3-3 2 5 3-1-2-5h4z" fill="#fff" stroke="#333" />
      </svg>
    </div>
  );
}
